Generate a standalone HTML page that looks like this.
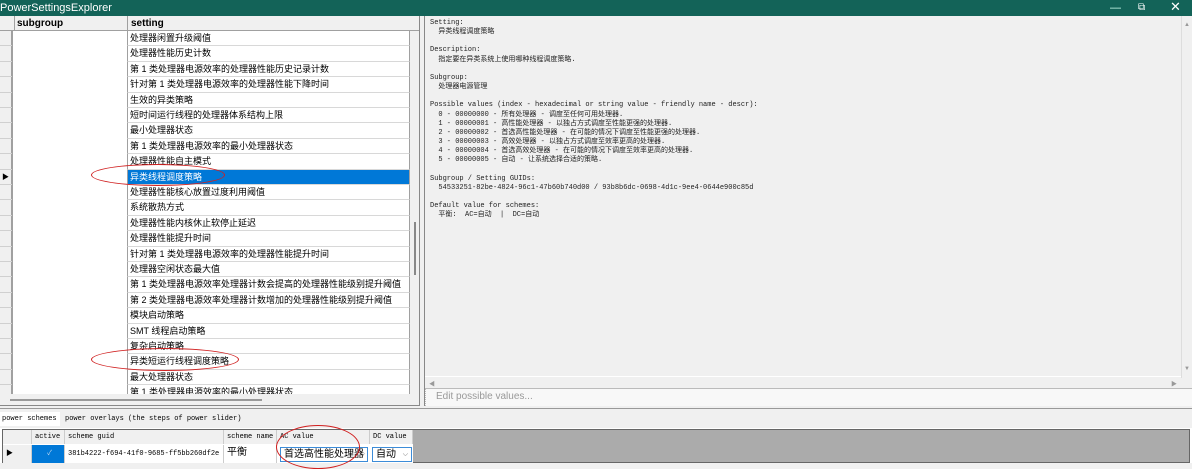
<!DOCTYPE html>
<html><head><meta charset="utf-8"><style>
*{margin:0;padding:0;box-sizing:border-box}
body{width:1192px;height:463px;overflow:hidden;background:#f0f0f0;position:relative;font-family:"Liberation Sans","Noto Sans CJK SC",sans-serif;font-size:11px;color:#000}
.abs{position:absolute}
#title{left:0;top:0;width:1192px;height:16px;background:#136358;color:#fff;font-size:11px;line-height:16px;padding-left:0}
#grid{left:0;top:16px;width:420px;height:390px;background:#fff;border-right:1px solid #888;border-bottom:1px solid #888;overflow:hidden}
.hdr{top:0;height:15px;background:#f0f0f0;border-bottom:1px solid #a0a0a0;font-size:10px;font-weight:bold;line-height:15px}
.rh{left:0;width:12px;background:#f0f0f0;border-right:1px solid #a0a0a0}
.row{position:absolute;left:127px;width:283px;height:15.4px;border-bottom:1px solid #d8d8d8;border-left:1px solid #a0a0a0;border-right:1px solid #a0a0a0;font-size:9px;line-height:15px;padding-left:2px;white-space:nowrap;overflow:hidden}
.rhc{position:absolute;left:0;width:12px;height:15.4px;border-bottom:1px solid #d0d0d0}
.sel{background:#0078d7;color:#fff}
#info{left:424px;top:16px;width:768px;height:390px;background:#f0f0f0;border-left:1px solid #888}
pre{font-family:"Liberation Mono","Noto Sans CJK SC",monospace;font-size:7px;line-height:9.15px;color:#222;position:absolute;left:5px;top:3px}
.ell{position:absolute;border:1.2px solid #d02020;border-radius:50%}
.tab{font-family:"Liberation Mono",monospace;font-size:7px;line-height:14px;top:412px;height:14px;white-space:nowrap}
.c{position:absolute;font-family:"Liberation Mono","Noto Sans CJK SC",monospace;font-size:7px;border-right:1px solid #ccc;height:14px;line-height:14px;padding-left:3px;white-space:nowrap;overflow:hidden}
</style></head><body>
<div id="title" class="abs">PowerSettingsExplorer
<span class="abs" style="left:1110px;top:0;color:#cfe;font-size:11px">—</span>
<span class="abs" style="left:1138px;top:0;font-size:10px">⧉</span>
<span class="abs" style="left:1170px;top:-1px;font-size:13px">✕</span>
</div>
<div id="grid" class="abs">
 <div class="abs hdr" style="left:0;width:420px"></div>
 <div class="abs hdr" style="left:14px;width:113px;padding-left:2px;border-left:1px solid #a0a0a0">subgroup</div>
 <div class="abs hdr" style="left:127px;width:283px;padding-left:3px;border-left:1px solid #a0a0a0">setting</div>
 <div class="abs rh" style="top:15px;height:375px"></div>
 <div class="abs" style="left:12px;top:15px;width:1px;height:375px;background:#a0a0a0"></div>
 <div id="rows"></div>
 <div class="abs" style="left:410px;top:15px;width:10px;height:365px;background:#f0f0f0"></div>
 <div class="abs" style="left:414px;top:206px;width:2px;height:53px;background:#888"></div>
 <div class="abs" style="left:0;top:378px;width:420px;height:12px;background:#f0f0f0"></div>
 <div class="abs" style="left:10px;top:383px;width:252px;height:2px;background:#999"></div>
</div>
<div id="info" class="abs">
<pre>Setting:
  异类线程调度策略

Description:
  指定要在异类系统上使用哪种线程调度策略.

Subgroup:
  处理器电源管理

Possible values (index - hexadecimal or string value - friendly name - descr):
  0 - 00000000 - 所有处理器 - 调度至任何可用处理器.
  1 - 00000001 - 高性能处理器 - 以独占方式调度至性能更强的处理器.
  2 - 00000002 - 首选高性能处理器 - 在可能的情况下调度至性能更强的处理器.
  3 - 00000003 - 高效处理器 - 以独占方式调度至效率更高的处理器.
  4 - 00000004 - 首选高效处理器 - 在可能的情况下调度至效率更高的处理器.
  5 - 00000005 - 自动 - 让系统选择合适的策略.

Subgroup / Setting GUIDs:
  54533251-82be-4824-96c1-47b60b740d00 / 93b8b6dc-0698-4d1c-9ee4-0644e900c85d

Default value for schemes:
  平衡:  AC=自动  |  DC=自动</pre>
 <div class="abs" style="left:756px;top:0;width:11px;height:362px;background:#f0f0f0;border-left:1px solid #ddd"></div>
 <div class="abs" style="left:759px;top:6px;font-size:6px;color:#999">▲</div>
 <div class="abs" style="left:759px;top:350px;font-size:6px;color:#999">▼</div>
 <div class="abs" style="left:0;top:360px;width:756px;height:1px;background:#fff"></div>
 <div class="abs" style="left:4px;top:363px;font-size:6px;color:#999">◀</div>
 <div class="abs" style="left:746px;top:363px;font-size:6px;color:#999">▶</div>
 <div class="abs" style="left:0;top:372px;width:768px;height:1px;background:#bbb"></div>
 <div class="abs" style="left:0;top:373px;width:768px;height:17px;background:#f8f8f8;color:#999;font-size:10px;line-height:16px;padding-left:10px;border-left:1px dotted #bbb">Edit possible values...</div>
</div>
<div class="abs" style="left:0;top:408px;width:1192px;height:1px;background:#999"></div>
<div class="abs tab" style="left:0;width:60px;background:#fff;padding-left:2px">power schemes</div>
<div class="abs tab" style="left:62px;width:182px;padding-left:3px">power overlays (the steps of power slider)</div>
<div class="abs" style="left:0;top:428px;width:1192px;height:35px;background:#fff"></div>
<div class="abs" style="left:2px;top:429px;width:1188px;height:34px;background:#ababab;border:1px solid #666"></div>
<div class="abs" style="left:3px;top:430px;width:410px;height:33px;background:#fff"></div>
<div class="c" style="left:3px;top:430px;width:29px;background:#f0f0f0"></div>
<div class="c" style="left:32px;top:430px;width:33px;background:#f0f0f0">active</div>
<div class="c" style="left:65px;top:430px;width:159px;background:#f0f0f0">scheme guid</div>
<div class="c" style="left:224px;top:430px;width:53px;background:#f0f0f0">scheme name</div>
<div class="c" style="left:277px;top:430px;width:93px;background:#f0f0f0">AC value</div>
<div class="c" style="left:370px;top:430px;width:43px;background:#f0f0f0">DC value</div>
<div class="c" style="left:3px;top:445px;width:29px;height:18px;background:#f0f0f0;font-size:7px;line-height:18px">▶</div>
<div class="c" style="left:32px;top:445px;width:33px;height:18px;background:#0078d7;color:#cde;text-align:center;line-height:18px">✓</div>
<div class="c" style="left:65px;top:445px;width:159px;height:18px;line-height:18px">381b4222-f694-41f0-9685-ff5bb260df2e</div>
<div class="c" style="left:224px;top:445px;width:53px;height:18px;line-height:18px;font-size:10px">平衡</div>
<div class="c" style="left:280px;top:447px;width:88px;height:15px;line-height:13px;font-size:10px;border:1px solid #3c8cd8;font-family:'Liberation Sans','Noto Sans CJK SC',sans-serif">首选高性能处理器<span style="position:absolute;right:2px;font-size:7px;color:#666">⌵</span></div>
<div class="c" style="left:372px;top:447px;width:40px;height:15px;line-height:13px;font-size:10px;border:1px solid #3c8cd8;font-family:'Liberation Sans','Noto Sans CJK SC',sans-serif">自动<span style="position:absolute;right:3px;font-size:7px;color:#666">⌵</span></div>
<div class="ell" style="left:91px;top:164px;width:134px;height:22px"></div>
<div class="ell" style="left:91px;top:348px;width:148px;height:23px"></div>
<div class="ell" style="left:276px;top:425px;width:84px;height:44px"></div>
<script>
var t=["处理器闲置升级阈值","处理器性能历史计数","第 1 类处理器电源效率的处理器性能历史记录计数","针对第 1 类处理器电源效率的处理器性能下降时间","生效的异类策略","短时间运行线程的处理器体系结构上限","最小处理器状态","第 1 类处理器电源效率的最小处理器状态","处理器性能自主模式","异类线程调度策略","处理器性能核心放置过度利用阈值","系统散热方式","处理器性能内核休止软停止延迟","处理器性能提升时间","针对第 1 类处理器电源效率的处理器性能提升时间","处理器空闲状态最大值","第 1 类处理器电源效率处理器计数会提高的处理器性能级别提升阈值","第 2 类处理器电源效率处理器计数增加的处理器性能级别提升阈值","模块启动策略","SMT 线程启动策略","复杂启动策略","异类短运行线程调度策略","最大处理器状态","第 1 类处理器电源效率的最小处理器状态"];
var h="";for(var i=0;i<t.length;i++){var y=15+i*15.4;h+='<div class="row'+(i==9?' sel':'')+'" style="top:'+y+'px">'+t[i]+'</div><div class="rhc" style="top:'+y+'px">'+(i==9?'<span style="font-size:7px;padding-left:2px">▶</span>':'')+'</div>';}
document.getElementById("rows").innerHTML=h;
</script>
</body></html>
